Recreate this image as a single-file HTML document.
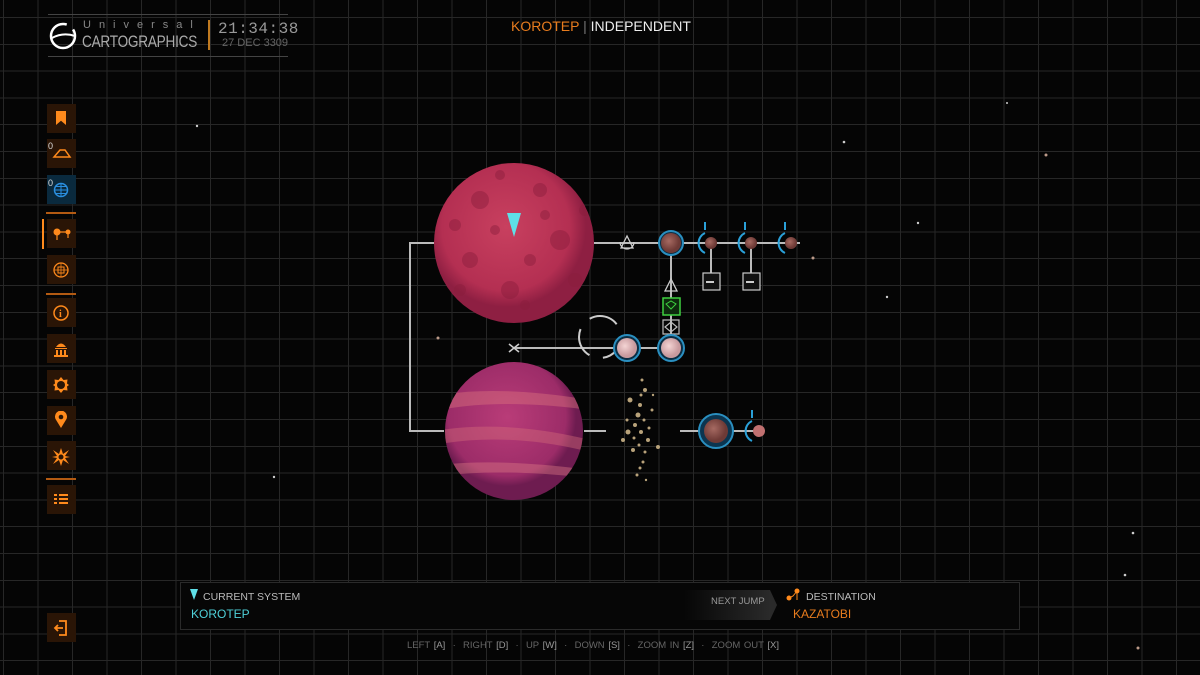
<!DOCTYPE html>
<html><head><meta charset="utf-8"><style>
html,body{margin:0;padding:0;}
body{width:1200px;height:675px;overflow:hidden;background:#050505;position:relative;font-family:"Liberation Sans",sans-serif;
background-image:repeating-linear-gradient(90deg,transparent 0,transparent 3px,#272727 3px,#272727 4px,transparent 4px,transparent 34.5px),
repeating-linear-gradient(180deg,transparent 0,transparent 17px,#272727 17px,#272727 18px,transparent 18px,transparent 26.8px);}
.abs{position:absolute;}
.btn{position:absolute;left:47px;width:29px;height:29px;background:#2a1506;}
.sep{position:absolute;left:46px;width:30px;height:2px;background:#b35a12;}
</style></head><body>
<div class="abs" style="left:48px;top:14px;width:240px;height:1px;background:#444"></div>
<div class="abs" style="left:48px;top:56px;width:240px;height:1px;background:#444"></div>
<svg class="abs" style="left:48px;top:19px" width="32" height="34" viewBox="0 0 32 34"><circle cx="15" cy="17" r="12" fill="none" stroke="#fff" stroke-width="2.5" stroke-dasharray="60 8"/><path d="M4 19 Q15 13 27 17" stroke="#fff" stroke-width="2" fill="none"/></svg>
<div class="abs" style="left:83px;top:19px;color:#888;font-size:11px;letter-spacing:8px">Universal</div>
<div class="abs" style="left:82px;top:32px;color:#aaa;font-size:17px;transform:scaleX(0.8);transform-origin:0 0;letter-spacing:-0.3px">CARTOGRAPHICS</div>
<div class="abs" style="left:208px;top:20px;width:2px;height:30px;background:#c07a20"></div>
<div class="abs" style="left:218px;top:20px;color:#999;font-size:16px;font-family:'Liberation Mono',monospace;letter-spacing:0.5px">21:34:38</div>
<div class="abs" style="left:222px;top:37px;color:#666;font-size:11px">27 DEC 3309</div>
<div class="abs" style="left:511px;top:18px;font-size:14px;color:#e87c1e">KOROTEP <span style="color:#777">|</span> <span style="color:#eee">INDEPENDENT</span></div>
<div class="btn" style="top:104px"></div><div class="abs" style="left:56px;top:111px;width:10px;height:14px;background:#ff8a1c;clip-path:polygon(0 0,100% 0,100% 100%,50% 70%,0 100%)"></div>
<div class="btn" style="top:139px"></div><div class="abs" style="left:48px;top:141px;color:#ddd;font-size:9px">0</div><svg class="abs" style="left:52px;top:147px" width="20" height="12"><path d="M2 10 L8 3 L13 3 L18 10 Z" fill="none" stroke="#ff8a1c" stroke-width="1.5"/></svg>
<div class="btn" style="top:175px;background:#0a2a3e"></div><div class="abs" style="left:48px;top:178px;color:#ddd;font-size:9px">0</div><svg class="abs" style="left:53px;top:182px" width="16" height="16"><circle cx="8" cy="8" r="6.5" fill="none" stroke="#2a8fe0" stroke-width="1.5"/><path d="M1.5 8H14.5M8 1.5V14.5M3 4.5H13M3 11.5H13" stroke="#2a8fe0"/></svg>
<div class="sep" style="top:212px"></div>
<div class="abs" style="left:42px;top:219px;width:2px;height:30px;background:#ff8a1c"></div>
<div class="btn" style="top:219px"></div><svg class="abs" style="left:52px;top:226px" width="20" height="16"><circle cx="5" cy="6" r="3.5" fill="#ff8a1c"/><circle cx="16" cy="6" r="2.5" fill="#ff8a1c"/><path d="M5 6H16M5 6V14M16 6V12" stroke="#ff8a1c" stroke-width="1.2"/></svg>
<div class="btn" style="top:255px"></div><svg class="abs" style="left:52px;top:261px" width="18" height="18"><circle cx="9" cy="9" r="7" fill="none" stroke="#ff8a1c" stroke-width="1.3"/><rect x="6" y="6" width="6" height="6" fill="none" stroke="#ff8a1c"/><path d="M2 9h14M9 2v14" stroke="#ff8a1c" stroke-width=".7"/></svg>
<div class="sep" style="top:293px"></div>
<div class="btn" style="top:298px"></div><svg class="abs" style="left:52px;top:304px" width="18" height="18"><circle cx="9" cy="9" r="7" fill="none" stroke="#ff8a1c" stroke-width="1.5"/><text x="7" y="13" fill="#ff8a1c" font-size="10" font-family="Liberation Serif" font-weight="bold">i</text></svg>
<div class="btn" style="top:334px"></div><svg class="abs" style="left:52px;top:340px" width="18" height="18"><path d="M4 7 Q9 0 14 7Z M3 8H15V9H3Z M4 10h2v5H4Z M8 10h2v5H8Z M12 10h2v5h-2Z M2 15H16V17H2Z" fill="#ff8a1c"/></svg>
<div class="btn" style="top:370px"></div><svg class="abs" style="left:52px;top:376px" width="18" height="18"><path d="M9 1 L11.5 4 L15.5 3.5 L15 7.5 L17 9 L15 10.5 L15.5 14.5 L11.5 14 L9 17 L6.5 14 L2.5 14.5 L3 10.5 L1 9 L3 7.5 L2.5 3.5 L6.5 4Z" fill="#ff8a1c"/><circle cx="9" cy="9" r="4" fill="#2a1506"/></svg>
<div class="btn" style="top:406px"></div><svg class="abs" style="left:54px;top:411px" width="14" height="18"><path d="M7 17 L1.5 8 A6 6 0 1 1 12.5 8 Z" fill="#ff8a1c"/><circle cx="7" cy="6" r="2.3" fill="#2a1506"/></svg>
<div class="btn" style="top:441px"></div><svg class="abs" style="left:51px;top:447px" width="20" height="20"><path d="M10 1 L12 7 L18 3 L14 9 L19 10 L14 11 L18 17 L12 13 L10 19 L8 13 L2 17 L6 11 L1 10 L6 9 L2 3 L8 7Z" fill="#ff8a1c"/><circle cx="10" cy="10" r="2.5" fill="#2a1506"/></svg>
<div class="sep" style="top:478px"></div>
<div class="btn" style="top:485px"></div><svg class="abs" style="left:54px;top:493px" width="14" height="12"><path d="M0 1h3v2H0zM5 1h9v2H5zM0 5h3v2H0zM5 5h9v2H5zM0 9h3v2H0zM5 9h9v2H5z" fill="#ff8a1c"/></svg>
<div class="btn" style="top:613px"></div><svg class="abs" style="left:53px;top:619px" width="16" height="18"><path d="M6 2H13V16H6" fill="none" stroke="#ff8a1c" stroke-width="1.8"/><path d="M10 9H2M5 6L2 9L5 12" fill="none" stroke="#ff8a1c" stroke-width="1.8"/></svg>
<svg class="abs" style="left:0;top:0" width="1200" height="675">
<defs>
<radialGradient id="s1" cx="45%" cy="40%"><stop offset="0" stop-color="#c8405f"/><stop offset=".8" stop-color="#b42f52"/><stop offset="1" stop-color="#8e1f42"/></radialGradient>
<radialGradient id="s2" cx="45%" cy="40%"><stop offset="0" stop-color="#b93c78"/><stop offset=".85" stop-color="#9c2c68"/><stop offset="1" stop-color="#6e1c50"/></radialGradient>
<radialGradient id="pl" cx="40%" cy="40%"><stop offset="0" stop-color="#a66a62"/><stop offset="1" stop-color="#6e3a36"/></radialGradient>
<radialGradient id="pk" cx="40%" cy="40%"><stop offset="0" stop-color="#f4d4d4"/><stop offset="1" stop-color="#c89a9e"/></radialGradient>
<clipPath id="c1"><circle cx="514" cy="243" r="79"/></clipPath>
<clipPath id="c2"><circle cx="514" cy="431" r="69"/></clipPath>
</defs>
<g stroke="#bbb" stroke-width="2" fill="none">
<path d="M434 243H410V431H444"/>
<path d="M594 243H800"/>
<path d="M671 243V348"/>
<path d="M514 348H670"/>
<path d="M584 431H606M680 431H760"/>
<path d="M711 243V275M751 243V275"/>
</g>
<circle cx="514" cy="243" r="80" fill="url(#s1)"/>
<g clip-path="url(#c1)" fill="#8a1e3c" opacity=".45">
<circle cx="480" cy="200" r="9"/><circle cx="540" cy="190" r="7"/><circle cx="560" cy="240" r="10"/><circle cx="470" cy="260" r="8"/><circle cx="510" cy="290" r="9"/><circle cx="455" cy="225" r="6"/><circle cx="575" cy="280" r="7"/><circle cx="530" cy="260" r="6"/><circle cx="495" cy="230" r="5"/><circle cx="545" cy="215" r="5"/><circle cx="460" cy="290" r="6"/><circle cx="585" cy="210" r="6"/><circle cx="500" cy="175" r="5"/><circle cx="525" cy="305" r="5"/>
</g>
<circle cx="514" cy="431" r="69" fill="url(#s2)"/>
<g clip-path="url(#c2)" opacity=".4">
<path d="M440 395 Q500 385 590 400 L590 410 Q500 398 440 410Z" fill="#e07a80"/>
<path d="M440 430 Q510 420 590 440 L590 452 Q510 432 440 444Z" fill="#d8707a"/>
<path d="M440 465 Q500 458 590 470 L590 478 Q500 468 440 476Z" fill="#e08088"/>
</g>
<path d="M507 213 L521 213 L514 237Z" fill="#5fe0e8"/>
<path d="M509 344 L519 352 M519 344 L509 352" stroke="#ccc" stroke-width="1.6"/>
<circle cx="600" cy="337" r="21" fill="none" stroke="#ccc" stroke-width="2" stroke-dasharray="30 14"/>
<path d="M627 236 l-6 12 h12z M620 242 a7 7 0 1 0 14 0" fill="none" stroke="#ccc" stroke-width="1.3"/>
<circle cx="671" cy="243" r="12" fill="#0b2e44" stroke="#2a8fc0" stroke-width="2"/><circle cx="671" cy="243" r="10" fill="url(#pl)"/>
<g fill="none" stroke="#2aa0d8" stroke-width="2">
<path d="M705 233 A11 11 0 0 0 705 253"/><path d="M745 233 A11 11 0 0 0 745 253"/><path d="M785 233 A11 11 0 0 0 785 253"/>
<path d="M705 222 v8 M745 222 v8 M785 222 v8"/>
<path d="M752 421 A11 11 0 0 0 752 441"/><path d="M752 410 v8"/>
</g>
<circle cx="711" cy="243" r="6" fill="url(#pl)"/><circle cx="751" cy="243" r="6" fill="url(#pl)"/><circle cx="791" cy="243" r="6" fill="url(#pl)"/>
<rect x="703" y="273" width="17" height="17" fill="#111" stroke="#ccc" stroke-width="1.2"/><rect x="743" y="273" width="17" height="17" fill="#111" stroke="#ccc" stroke-width="1.2"/>
<path d="M706 282h8M746 282h8" stroke="#ccc" stroke-width="2"/>
<path d="M671 279 l-6 12 h12z" fill="none" stroke="#ccc" stroke-width="1.3"/>
<rect x="663" y="298" width="17" height="17" fill="#0d2a0d" stroke="#3fd040" stroke-width="1.5"/><path d="M666 304 l5 -3 l5 3 l-5 5z" fill="none" stroke="#3fd040"/>
<path d="M663 320 h16 v14 h-16z M665 327 l6 -5 l6 5 l-6 5z" fill="none" stroke="#bbb" stroke-width="1.2"/>
<circle cx="627" cy="348" r="13" fill="#0b2e44" stroke="#2a8fc0" stroke-width="2"/><circle cx="627" cy="348" r="10" fill="url(#pk)"/>
<circle cx="671" cy="348" r="13" fill="#0b2e44" stroke="#2a8fc0" stroke-width="2"/><circle cx="671" cy="348" r="10" fill="url(#pk)"/>
<circle cx="716" cy="431" r="17" fill="#0b3550" stroke="#2a8fc0" stroke-width="2"/><circle cx="716" cy="431" r="12" fill="url(#pl)"/>
<circle cx="759" cy="431" r="6" fill="#c07070"/>
<g fill="#b8a27a">
<circle cx="630" cy="400" r="2.5"/><circle cx="645" cy="390" r="2"/><circle cx="638" cy="415" r="2.5"/><circle cx="628" cy="432" r="2.5"/><circle cx="648" cy="440" r="2"/><circle cx="633" cy="450" r="2"/><circle cx="652" cy="410" r="1.5"/><circle cx="643" cy="462" r="1.5"/><circle cx="637" cy="475" r="1.5"/><circle cx="623" cy="440" r="2"/><circle cx="658" cy="447" r="2"/><circle cx="642" cy="380" r="1.5"/><circle cx="635" cy="425" r="2"/>
<circle cx="641" cy="395" r="1.5"/><circle cx="640" cy="405" r="2"/><circle cx="644" cy="420" r="1.5"/><circle cx="641" cy="432" r="2"/><circle cx="639" cy="445" r="1.5"/><circle cx="645" cy="452" r="1.5"/><circle cx="640" cy="468" r="1.5"/><circle cx="646" cy="480" r="1.2"/><circle cx="634" cy="438" r="1.5"/><circle cx="649" cy="428" r="1.5"/><circle cx="627" cy="420" r="1.5"/><circle cx="653" cy="395" r="1.2"/>
</g>
<g fill="#ccc"><circle cx="197" cy="126" r="1.2"/><circle cx="1007" cy="103" r="1"/><circle cx="1046" cy="155" r="1.5" fill="#b98"/><circle cx="844" cy="142" r="1.3"/><circle cx="438" cy="338" r="1.5" fill="#b98"/><circle cx="1133" cy="533" r="1.3"/><circle cx="274" cy="477" r="1.2"/><circle cx="1138" cy="648" r="1.5" fill="#b98"/><circle cx="887" cy="297" r="1.2"/><circle cx="918" cy="223" r="1.2"/><circle cx="813" cy="258" r="1.5" fill="#b98"/><circle cx="1125" cy="575" r="1.3"/></g>
</svg>
<div class="abs" style="left:180px;top:582px;width:838px;height:46px;background:#060606;border:1px solid #2a2a2a"></div>
<svg class="abs" style="left:190px;top:589px" width="8" height="12"><path d="M0 0h8L4 11Z" fill="#5fe0e8"/></svg>
<div class="abs" style="left:203px;top:591px;color:#bbb;font-size:10.5px">CURRENT SYSTEM</div>
<div class="abs" style="left:191px;top:607px;color:#4fd0d8;font-size:12px">KOROTEP</div>
<div class="abs" style="left:684px;top:590px;width:86px;height:30px;background:linear-gradient(90deg,#060606,#2a2a2a)"></div>
<div class="abs" style="left:770px;top:590px;width:0;height:0;border-top:15px solid transparent;border-bottom:15px solid transparent;border-left:7px solid #2a2a2a"></div>
<div class="abs" style="left:711px;top:596px;color:#999;font-size:9.5px">NEXT JUMP</div>
<svg class="abs" style="left:786px;top:588px" width="16" height="14"><circle cx="11" cy="3" r="2.5" fill="#ff8a1c"/><circle cx="3" cy="10" r="2.5" fill="#ff8a1c"/><path d="M11 3 L7 8 L3 10 M11 3 V12" stroke="#ff8a1c" stroke-width="1"/></svg>
<div class="abs" style="left:806px;top:591px;color:#bbb;font-size:10.5px">DESTINATION</div>
<div class="abs" style="left:793px;top:607px;color:#e87c1e;font-size:12px">KAZATOBI</div>
<div class="abs" style="left:407px;top:640px;color:#666;font-size:9.5px;word-spacing:1px">LEFT <span style="color:#999">[A]</span> &nbsp;·&nbsp; RIGHT <span style="color:#999">[D]</span> &nbsp;·&nbsp; UP <span style="color:#999">[W]</span> &nbsp;·&nbsp; DOWN <span style="color:#999">[S]</span> &nbsp;·&nbsp; ZOOM IN <span style="color:#999">[Z]</span> &nbsp;·&nbsp; ZOOM OUT <span style="color:#999">[X]</span></div>
</body></html>
